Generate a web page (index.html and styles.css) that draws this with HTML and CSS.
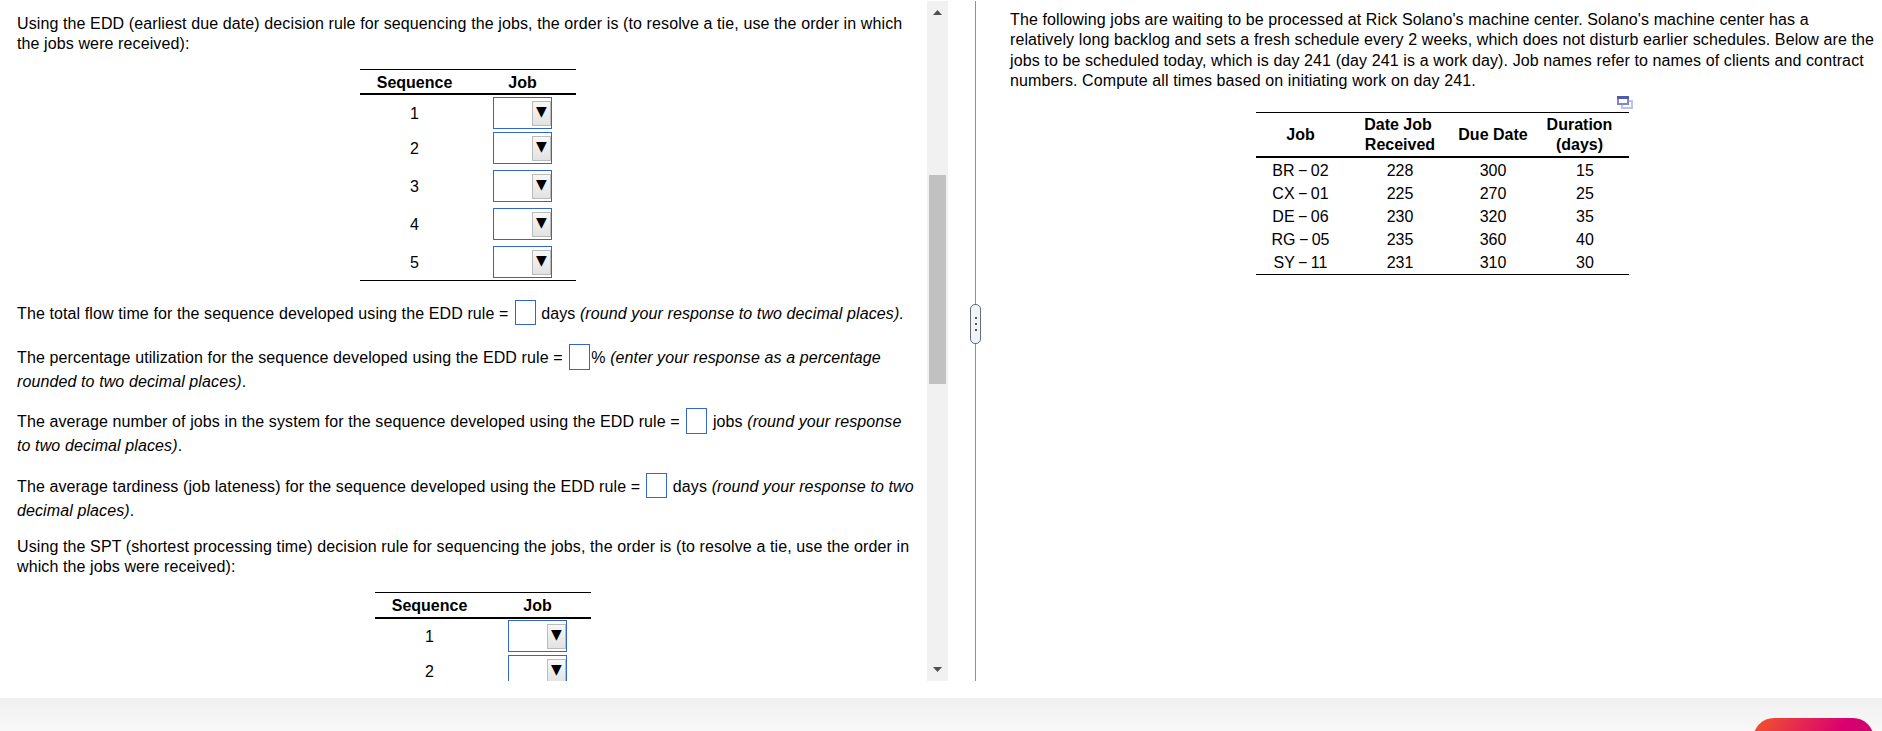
FILE: index.html
```html
<!DOCTYPE html>
<html lang="en">
<head>
    <meta charset="UTF-8">
    <meta name="viewport" content="width=device-width, initial-scale=1.0">
    <title>Job Sequencing</title>
    <link rel="stylesheet" href="styles.css">
</head>
<body>
    <main class="workspace">
        <section class="question">
            <p class="intro">Using the EDD (earliest due date) decision rule for sequencing the jobs, the order is (to resolve a tie, use the order in which<br>the jobs were received):</p>

            <div class="seq-table">
                <div class="seq-head"><span>Sequence</span><span>Job</span></div>
                <div class="seq-row first"><span>1</span><button class="pick"><i>&#9660;</i></button></div>
                <div class="seq-row"><span>2</span><button class="pick"><i>&#9660;</i></button></div>
                <div class="seq-row"><span>3</span><button class="pick"><i>&#9660;</i></button></div>
                <div class="seq-row"><span>4</span><button class="pick"><i>&#9660;</i></button></div>
                <div class="seq-row"><span>5</span><button class="pick"><i>&#9660;</i></button></div>
            </div>

            <p class="answer flow">The total flow time for the sequence developed using the EDD rule = <input type="text" class="blank"> days <em>(round your response to two decimal places).</em></p>
            <p class="answer util">The percentage utilization for the sequence developed using the EDD rule = <input type="text" class="blank tall">% <em>(enter your response as a percentage<br>rounded to two decimal places)</em>.</p>
            <p class="answer avg">The average number of jobs in the system for the sequence developed using the EDD rule = <input type="text" class="blank tall"> jobs <em>(round your response<br>to two decimal places)</em>.</p>
            <p class="answer late">The average tardiness (job lateness) for the sequence developed using the EDD rule = <input type="text" class="blank"> days <em>(round your response to two<br>decimal places)</em>.</p>

            <p class="intro spt">Using the SPT (shortest processing time) decision rule for sequencing the jobs, the order is (to resolve a tie, use the order in<br>which the jobs were received):</p>

            <div class="seq-table second">
                <div class="seq-head"><span>Sequence</span><span>Job</span></div>
                <div class="seq-row first"><span>1</span><button class="pick"><i>&#9660;</i></button></div>
                <div class="seq-row"><span>2</span><button class="pick"><i>&#9660;</i></button></div>
            </div>
        </section>

        <div class="scrollbar">
            <svg class="arrow" width="9" height="5" viewBox="0 0 9 5"><path d="M0 5 L4.5 0 L9 5 Z" fill="#505050"/></svg>
            <div class="thumb"></div>
            <svg class="arrow" width="9" height="5" viewBox="0 0 9 5"><path d="M0 0 L4.5 5 L9 0 Z" fill="#505050"/></svg>
        </div>

        <div class="divider">
            <div class="handle"><b></b><b></b><b></b></div>
        </div>

        <section class="details">
            <p>The following jobs are waiting to be processed at Rick Solano's machine center. Solano's machine center has a<br>relatively long backlog and sets a fresh schedule every 2 weeks, which does not disturb earlier schedules. Below are the<br>jobs to be scheduled today, which is day 241 (day 241 is a work day). Job names refer to names of clients and contract<br>numbers. Compute all times based on initiating work on day 241.</p>
            <div class="popout">
                <svg width="16" height="14" viewBox="0 0 16 14">
                    <rect x="5" y="5" width="10" height="7" fill="#fff" stroke="#bcc3e4" stroke-width="2"/>
                    <rect x="1" y="1" width="10" height="7" fill="#fff" stroke="#7c88c6" stroke-width="2"/>
                    <path d="M0 1.5 H12" stroke="#4f5dab" stroke-width="3"/>
                </svg>
            </div>
            <table class="jobs">
                <colgroup><col class="c-job"><col class="c-date"><col class="c-due"><col></colgroup>
                <thead>
                    <tr><th>Job</th><th><span class="date-job">Date Job</span><br>Received</th><th>Due Date</th><th class="dur">Duration<br>(days)</th></tr>
                </thead>
                <tbody>
                    <tr><td>BR &minus; 02</td><td>228</td><td>300</td><td>15</td></tr>
                    <tr><td>CX &minus; 01</td><td>225</td><td>270</td><td>25</td></tr>
                    <tr><td>DE &minus; 06</td><td>230</td><td>320</td><td>35</td></tr>
                    <tr><td>RG &minus; 05</td><td>235</td><td>360</td><td>40</td></tr>
                    <tr><td>SY &minus; 11</td><td>231</td><td>310</td><td>30</td></tr>
                </tbody>
            </table>
        </section>
    </main>

    <footer class="bottom-bar">
        <button class="next"></button>
    </footer>
</body>
</html>
```

FILE: styles.css
```css
* {
  box-sizing: border-box;
  margin: 0;
  padding: 0;
}

body {
  height: 731px;
  overflow: hidden;
  background: #fff;
  color: #000;
  font-family: "Liberation Sans", Arial, sans-serif;
  font-size: 16px;
  line-height: 20px;
}

p {
  letter-spacing: 0.108px;
}

.workspace {
  display: flex;
  height: 681px;
  margin-bottom: 17px;
  padding-top: 1px;
}

/* Left pane */
.question {
  width: 927px;
  height: 680px;
  padding: 13px 0 0 17px;
  overflow: hidden;
  white-space: nowrap;
}

.seq-table {
  width: 216px;
  height: 212px;
  margin: 15px 0 0 343px;
  border-top: 1px solid #000;
  border-bottom: 1px solid #000;
}

.seq-table.second {
  margin: 15px 0 0 358px;
}

.seq-head,
.seq-row {
  display: grid;
  grid-template-columns: 109px 107px;
  text-align: center;
}

.seq-head {
  height: 25px;
  padding-top: 3px;
  border-bottom: 2px solid #000;
  font-weight: bold;
}

.second .seq-head {
  height: 26px;
}

.seq-row {
  height: 32px;
  margin-top: 6px;
  line-height: 33px;
}

.seq-row.first {
  margin-top: 2px;
}

.second .seq-row.first {
  margin-top: 1px;
}

.seq-row.first + .seq-row {
  margin-top: 3px;
}

.pick {
  display: flex;
  justify-content: flex-end;
  width: 59px;
  height: 32px;
  margin-left: 24px;
  padding-top: 3px;
  border: 1px solid #36c;
  background: #fff;
}

.pick i {
  width: 19px;
  height: 25px;
  border: 1px solid #bbb;
  background: linear-gradient(#f8f8f8, #e2e2e2);
  font: normal 14px/19px "DejaVu Sans", sans-serif;
  text-align: center;
}

.answer {
  line-height: 24px;
}

.flow {
  margin-top: 19px;
}

.util {
  margin-top: 18px;
}

.avg {
  margin-top: 14px;
}

.late {
  margin-top: 15px;
}

.spt {
  margin-top: 14px;
}

.blank {
  width: 21px;
  height: 25px;
  margin: 0 1px 0 1.5px;
  border: 1px solid #36c;
  vertical-align: 2px;
}

.blank.tall {
  height: 26px;
  margin-right: 1.5px;
  vertical-align: 1px;
}

/* Scrollbar */
.scrollbar {
  display: flex;
  flex-direction: column;
  align-items: center;
  width: 21px;
  padding: 9px 0;
  background: #f1f1f1;
}

.thumb {
  width: 17px;
  height: 209px;
  margin: 160px 0 auto;
  background: #c1c1c1;
}

/* Pane divider */
.divider {
  display: flex;
  align-items: center;
  justify-content: center;
  width: 11px;
  margin: 0 29px 0 22px;
  background: linear-gradient(#8a929d, #8a929d) center / 1px 100% no-repeat;
}

.handle {
  display: flex;
  flex-direction: column;
  align-items: center;
  justify-content: center;
  gap: 4px;
  width: 11px;
  height: 40px;
  margin-top: -34px;
  border: 1px solid #5f6d7c;
  border-radius: 5px;
  background: #f3f4f6;
}

.handle b {
  width: 2px;
  height: 2px;
  background: #555;
}

/* Right pane */
.details {
  flex: 1;
  padding-top: 9px;
  line-height: 20.25px;
  white-space: nowrap;
}

.popout {
  display: flex;
  height: 21px;
  padding: 5px 0 0 607px;
}

.jobs {
  width: 373px;
  margin-left: 246px;
  border-collapse: separate;
  border-spacing: 0;
  border-top: 1px solid #000;
  border-bottom: 1px solid #000;
  line-height: 20px;
  table-layout: fixed;
  text-align: center;
}

.c-job {
  width: 99px;
}

.c-date {
  width: 90px;
}

.c-due {
  width: 96px;
}

.jobs th {
  height: 45px;
  border-bottom: 2px solid #000;
}

.jobs td {
  height: 23px;
}

.jobs th:first-child,
.jobs td:first-child {
  padding-right: 10px;
  word-spacing: -1px;
}

.jobs tbody tr:first-child td {
  height: 24px;
  padding-top: 1px;
}

.jobs .dur {
  padding-right: 11px;
}

.date-job {
  padding-right: 4px;
}

/* Footer */
.bottom-bar {
  display: flex;
  justify-content: flex-end;
  height: 33px;
  padding: 20px 8px 0 0;
  background: linear-gradient(#f0f0f0, #f8f8f8);
}

.next {
  flex: none;
  width: 121px;
  height: 42px;
  border: none;
  border-radius: 21px;
  background: linear-gradient(120deg, #ef4a36 10%, #db0070 65%, #c8006e);
}
```
